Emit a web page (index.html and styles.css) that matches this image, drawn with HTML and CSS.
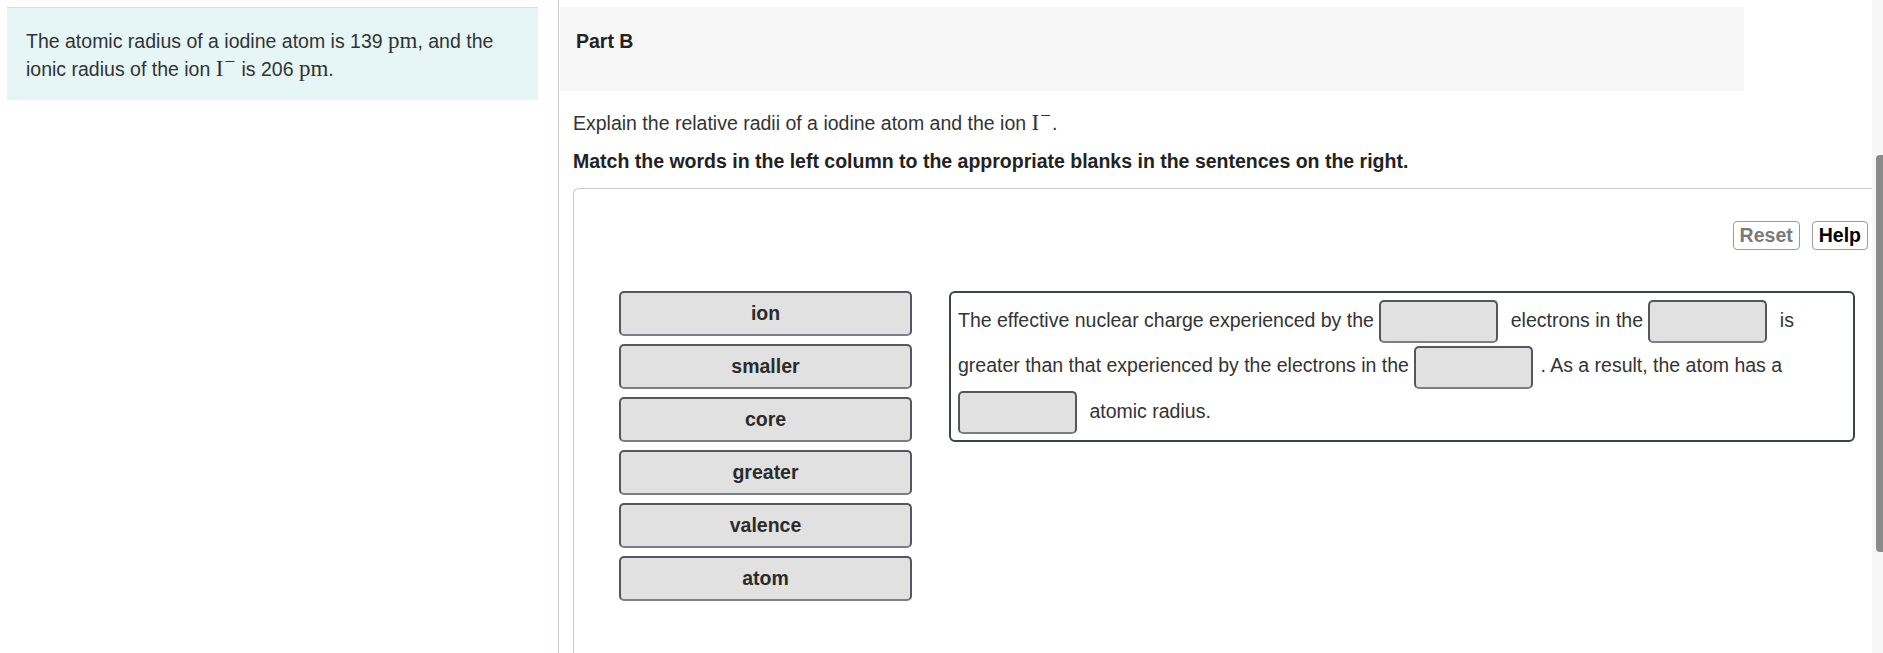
FILE: index.html
```html
<!DOCTYPE html>
<html>
<head>
<meta charset="utf-8">
<link rel="stylesheet" href="styles.css">
</head>
<body>
<div class="page">
  <aside class="intro-col">
    <div class="intro">
      The atomic radius of a iodine atom is 139 <span class="math">pm</span>, and the
      ionic radius of the ion <span class="math">I<sup>−</sup></span> is 206 <span class="math">pm</span>.
    </div>
  </aside>
  <main class="part">
    <div class="part-head">Part B</div>
    <p class="prompt">Explain the relative radii of a iodine atom and the ion <span class="math">I<sup>−</sup></span>.</p>
    <p class="instr">Match the words in the left column to the appropriate blanks in the sentences on the right.</p>
    <div class="dnd">
      <div class="tools">
        <button class="btn btn-reset">Reset</button>
        <button class="btn btn-help">Help</button>
      </div>
      <div class="dnd-body">
        <div class="words">
          <div class="tile">ion</div>
          <div class="tile">smaller</div>
          <div class="tile">core</div>
          <div class="tile">greater</div>
          <div class="tile">valence</div>
          <div class="tile">atom</div>
        </div>
        <div class="sentence">The effective nuclear charge experienced by the <span class="blank"></span> electrons in the <span class="blank"></span> is greater than that experienced by the electrons in the <span class="blank"></span>. As a result, the atom has a <span class="blank"></span> atomic radius.</div>
      </div>
    </div>
  </main>
  <div class="scrollbar"><div class="thumb"></div></div>
</div>
</body>
</html>
```

FILE: styles.css
```css
html, body {
  margin: 0;
  padding: 0;
  background: #fff;
}
body {
  font-family: "Liberation Sans", Arial, sans-serif;
  font-size: 19.5px;
  color: #333;
  overflow: hidden;
}
.page {
  display: flex;
  height: 653px;
  overflow: hidden;
}
.intro-col {
  width: 558px;
  flex: none;
  border-right: 1px solid #c9cdd6;
}
.intro {
  margin: 7px 0 0 7px;
  width: 531px;
  box-sizing: border-box;
  border-top: 1px solid #dcdcdc;
  background: #e6f5f6;
  padding: 19px 19px 17px 19px;
  line-height: 28px;
}
.math {
  font-family: "Liberation Serif", "DejaVu Serif", serif;
  font-size: 23px;
}
.math sup {
  font-size: 19px;
  line-height: 0;
  vertical-align: 8px;
  margin-left: 1px;
  margin-right: 1px;
}
.part {
  flex: 1;
  min-width: 0;
  overflow: hidden;
}
.part-head {
  margin: 7px 0 0 1px;
  width: 1184px;
  height: 84px;
  box-sizing: border-box;
  background: #f7f7f7;
  padding: 23px 16px 0;
  font-weight: bold;
  color: #222;
  line-height: 23px;
}
.prompt {
  margin: 20px 0 0 14px;
  line-height: 23px;
}
.instr {
  margin: 15px 0 0 14px;
  line-height: 23px;
  font-weight: bold;
  color: #222;
}
.dnd {
  margin: 15px 0 0 14px;
  height: 470px;
  box-sizing: border-box;
  border: 1px solid #c8c8c8;
  border-right: none;
  border-radius: 6px 0 0 6px;
  padding: 32px 4px 0 0;
}
.tools {
  display: flex;
  justify-content: flex-end;
  gap: 12px;
}
.btn {
  font-family: "Liberation Sans", Arial, sans-serif;
  font-size: 19.5px;
  font-weight: bold;
  background: #fff;
  border: 1px solid #9a9a9a;
  border-radius: 4px;
  height: 29px;
  padding: 0 6px;
  line-height: 27px;
}
.btn-reset { color: #7a7a7a; }
.btn-help { color: #000; }
.dnd-body {
  display: flex;
  align-items: flex-start;
  margin-top: 41px;
  padding-left: 45px;
  gap: 37px;
}
.words {
  width: 293px;
  display: flex;
  flex-direction: column;
  gap: 8px;
}
.tile {
  height: 45px;
  box-sizing: border-box;
  background: #e1e1e1;
  border: 2px solid #56565f;
  border-bottom-color: #7d7d8a;
  border-radius: 5px;
  text-align: center;
  font-weight: bold;
  line-height: 40px;
  color: #2b2b2b;
}
.sentence {
  width: 906px;
  box-sizing: border-box;
  border: 2px solid #3d4347;
  border-radius: 6px;
  padding: 5px 7px 6px 7px;
  line-height: 45px;
  color: #333;
}
.blank {
  display: inline-block;
  width: 119px;
  height: 43px;
  box-sizing: border-box;
  background: #e1e1e1;
  border: 2px solid #56565f;
  border-bottom-color: #7d7d8a;
  border-radius: 5px;
  vertical-align: middle;
  margin-right: 7px;
}
.scrollbar {
  width: 11px;
  flex: none;
  background: #f6f6f6;
  display: flex;
  justify-content: flex-end;
}
.thumb {
  width: 7px;
  margin-top: 155px;
  height: 397px;
  background: #8a8a8a;
  border-radius: 4px 0 0 4px;
}
```
